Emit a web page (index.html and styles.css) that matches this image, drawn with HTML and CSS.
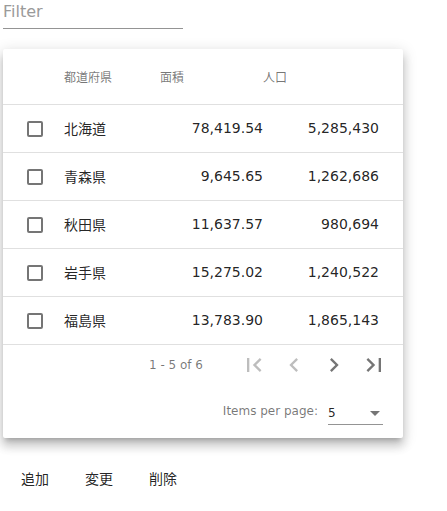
FILE: index.html
```html
<!DOCTYPE html>
<html lang="ja">
<head>
    <meta charset="UTF-8">
    <meta name="viewport" content="width=device-width, initial-scale=1.0">
    <title>都道府県一覧</title>
    <link rel="stylesheet" href="styles.css">
</head>
<body>
    <div class="page">
        <div class="filter">
            <input type="text" class="filter-input" placeholder="Filter">
        </div>

        <div class="card">
            <table class="pref-table">
                <thead>
                    <tr>
                        <th class="col-select"></th>
                        <th class="col-name">都道府県</th>
                        <th class="col-area">面積</th>
                        <th class="col-pop">人口</th>
                    </tr>
                </thead>
                <tbody>
                    <tr>
                        <td class="col-select"><span class="checkbox"></span></td>
                        <td class="col-name">北海道</td>
                        <td class="col-area num">78,419.54</td>
                        <td class="col-pop num">5,285,430</td>
                    </tr>
                    <tr>
                        <td class="col-select"><span class="checkbox"></span></td>
                        <td class="col-name">青森県</td>
                        <td class="col-area num">9,645.65</td>
                        <td class="col-pop num">1,262,686</td>
                    </tr>
                    <tr>
                        <td class="col-select"><span class="checkbox"></span></td>
                        <td class="col-name">秋田県</td>
                        <td class="col-area num">11,637.57</td>
                        <td class="col-pop num">980,694</td>
                    </tr>
                    <tr>
                        <td class="col-select"><span class="checkbox"></span></td>
                        <td class="col-name">岩手県</td>
                        <td class="col-area num">15,275.02</td>
                        <td class="col-pop num">1,240,522</td>
                    </tr>
                    <tr>
                        <td class="col-select"><span class="checkbox"></span></td>
                        <td class="col-name">福島県</td>
                        <td class="col-area num">13,783.90</td>
                        <td class="col-pop num">1,865,143</td>
                    </tr>
                </tbody>
            </table>

            <div class="paginator">
                <div class="range-row">
                    <span class="range-label">1 - 5 of 6</span>
                    <button class="icon-btn" disabled>
                        <svg viewBox="0 0 24 24"><path d="M18.41 16.59L13.82 12l4.59-4.59L17 6l-6 6 6 6zM6 6h2v12H6z"/></svg>
                    </button>
                    <button class="icon-btn" disabled>
                        <svg viewBox="0 0 24 24"><path d="M15.41 7.41L14 6l-6 6 6 6 1.41-1.41L10.83 12z"/></svg>
                    </button>
                    <button class="icon-btn">
                        <svg viewBox="0 0 24 24"><path d="M10 6L8.59 7.41 13.17 12l-4.58 4.59L10 18l6-6z"/></svg>
                    </button>
                    <button class="icon-btn">
                        <svg viewBox="0 0 24 24"><path d="M5.59 7.41L10.18 12l-4.59 4.59L7 18l6-6-6-6zM16 6h2v12h-2z"/></svg>
                    </button>
                </div>
                <div class="size-row">
                    <span class="size-label">Items per page:</span>
                    <div class="size-select">
                        <span class="size-value">5</span>
                        <span class="arrow"></span>
                    </div>
                </div>
            </div>
        </div>

        <div class="actions">
            <button class="text-btn">追加</button>
            <button class="text-btn">変更</button>
            <button class="text-btn">削除</button>
        </div>
    </div>
</body>
</html>
```

FILE: styles.css
```css
:root {
    --text-color: rgba(0, 0, 0, 0.87);
    --muted-color: rgba(0, 0, 0, 0.54);
    --disabled-color: rgba(0, 0, 0, 0.26);
    --line-color: rgba(0, 0, 0, 0.12);
}

* {
    box-sizing: border-box;
    margin: 0;
    padding: 0;
}

body {
    font-family: "DejaVu Sans", "Noto Sans CJK JP", sans-serif;
    color: var(--text-color);
    background: #fff;
}

.page {
    padding: 0 3px;
    width: 403px;
}

/* フィルター入力 */
.filter {
    width: 180px;
    height: 29px;
    border-bottom: 1px solid rgba(0, 0, 0, 0.42);
    margin-bottom: 20px;
}

.filter-input {
    width: 100%;
    border: none;
    outline: none;
    background: transparent;
    font-family: inherit;
    font-size: 16px;
    padding-top: 2px;
    line-height: 20px;
    color: var(--text-color);
}

.filter-input::placeholder {
    color: #9a9a9a;
    opacity: 1;
}

/* テーブルカード */
.card {
    width: 400px;
    background: #fff;
    border-radius: 2px;
    box-shadow: 0 5px 5px -3px rgba(0, 0, 0, 0.2),
                0 8px 10px 1px rgba(0, 0, 0, 0.14),
                0 3px 14px 2px rgba(0, 0, 0, 0.12);
}

.pref-table {
    width: 100%;
    border-collapse: collapse;
    table-layout: fixed;
}

.pref-table th,
.pref-table td {
    border-bottom: 1px solid var(--line-color);
    padding: 0;
    text-align: left;
}

.pref-table th {
    height: 55px;
    font-size: 12px;
    font-weight: 400;
    color: var(--muted-color);
}

.pref-table td {
    height: 48px;
    font-size: 14px;
}

.col-select {
    width: 61px;
    padding-left: 24px !important;
}

.col-name {
    width: 96px;
}

.col-area {
    width: 103px;
}

.col-pop {
    padding-right: 24px !important;
}

.num {
    text-align: right !important;
}

.checkbox {
    display: block;
    width: 16px;
    height: 16px;
    border: 2px solid var(--muted-color);
    border-radius: 2px;
    margin-top: 1px;
}

/* ページネーター */
.paginator {
    padding: 0 9px 0 8px;
    font-size: 12px;
    color: var(--muted-color);
}

.range-row {
    display: flex;
    align-items: center;
    justify-content: flex-end;
    height: 40px;
}

.range-label {
    margin-right: 31px;
}

.icon-btn {
    width: 40px;
    height: 40px;
    border: none;
    background: transparent;
    display: flex;
    align-items: center;
    justify-content: center;
    cursor: pointer;
}

.icon-btn svg {
    width: 28px;
    height: 28px;
    fill: var(--muted-color);
}

.icon-btn:disabled svg {
    fill: var(--disabled-color);
}

.size-row {
    display: flex;
    align-items: center;
    justify-content: flex-end;
    height: 53px;
    padding-right: 11px;
}

.size-label {
    margin-right: 10px;
}

.size-select {
    position: relative;
    width: 55px;
    height: 24px;
    border-bottom: 1px solid rgba(0, 0, 0, 0.42);
    display: flex;
    align-items: center;
    margin-top: 4px;
}

.size-value {
    color: var(--text-color);
    font-size: 12px;
}

.arrow {
    position: absolute;
    right: 3px;
    top: 10px;
    width: 0;
    height: 0;
    border-left: 5px solid transparent;
    border-right: 5px solid transparent;
    border-top: 5px solid var(--muted-color);
}

/* 操作ボタン */
.actions {
    display: flex;
    margin-top: 22px;
}

.text-btn {
    min-width: 64px;
    height: 36px;
    padding: 0 16px;
    border: none;
    background: transparent;
    font-family: inherit;
    font-size: 14px;
    color: var(--text-color);
    cursor: pointer;
}
```
